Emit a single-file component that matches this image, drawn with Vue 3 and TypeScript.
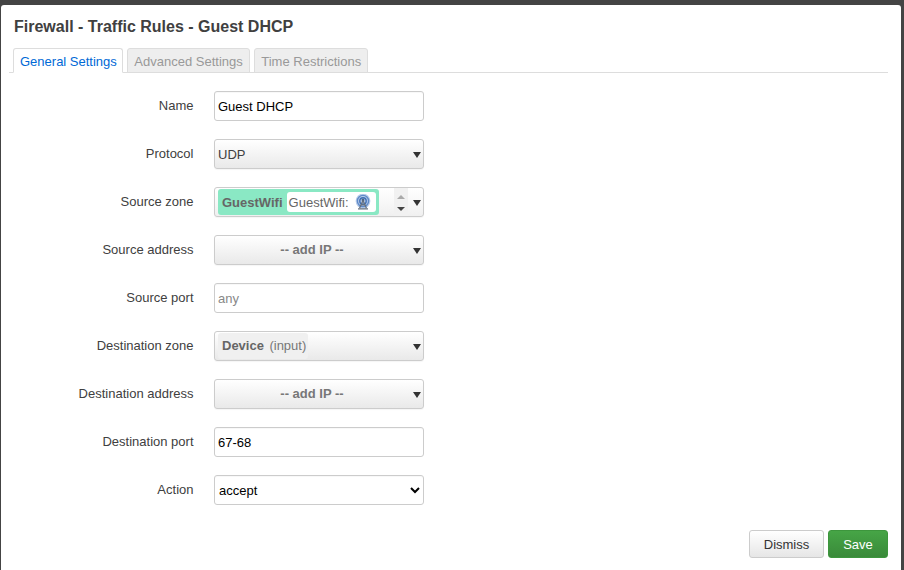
<script setup lang="ts">
interface Tab { label: string; active: boolean }
const tabs: Tab[] = [
  { label: 'General Settings', active: true },
  { label: 'Advanced Settings', active: false },
  { label: 'Time Restrictions', active: false },
]
</script>

<template>
  <div class="page">
    <div class="modal">
      <h4 class="title">Firewall - Traffic Rules - Guest DHCP</h4>
      <ul class="tabs">
        <li v-for="t in tabs" :key="t.label" class="tab" :class="{ active: t.active }">{{ t.label }}</li>
      </ul>
      <div class="form">
        <div class="row">
          <label class="lbl">Name</label>
          <input class="field" type="text" value="Guest DHCP" />
        </div>
        <div class="row">
          <label class="lbl">Protocol</label>
          <div class="drop"><span class="plain">UDP</span><span class="arrow"></span></div>
        </div>
        <div class="row">
          <label class="lbl">Source zone</label>
          <div class="drop zone-drop">
            <span class="zone">
              <b class="zone-name">GuestWifi</b>
              <span class="iface">GuestWifi:
                <svg class="wifi" viewBox="0 0 16 16" width="16" height="16">
                  <circle cx="8" cy="7" r="7.4" fill="#b9cdea" />
                  <circle cx="8" cy="7" r="5.6" fill="none" stroke="#5f8ac8" stroke-width="1.4" />
                  <circle cx="8" cy="7" r="3.2" fill="none" stroke="#3f6fb5" stroke-width="1.4" />
                  <circle cx="8" cy="6" r="1.4" fill="#4c6488" />
                  <path d="M8 6.5 L4.6 14 M8 6.5 L11.4 14 M3 14.8 H13 M6.2 10.8 H9.8" fill="none" stroke="#66707e" stroke-width="1.3" />
                </svg>
              </span>
            </span>
            <span class="spin"><i class="up"></i><i class="down"></i></span>
            <span class="arrow"></span>
          </div>
        </div>
        <div class="row">
          <label class="lbl">Source address</label>
          <div class="drop"><span class="add">-- add IP --</span><span class="arrow"></span></div>
        </div>
        <div class="row">
          <label class="lbl">Source port</label>
          <input class="field" type="text" placeholder="any" />
        </div>
        <div class="row">
          <label class="lbl">Destination zone</label>
          <div class="drop">
            <span class="device"><b>Device</b><span class="dim">(input)</span></span>
            <span class="arrow"></span>
          </div>
        </div>
        <div class="row">
          <label class="lbl">Destination address</label>
          <div class="drop"><span class="add">-- add IP --</span><span class="arrow"></span></div>
        </div>
        <div class="row">
          <label class="lbl">Destination port</label>
          <input class="field" type="text" value="67-68" />
        </div>
        <div class="row">
          <label class="lbl">Action</label>
          <select class="field select">
            <option>accept</option>
          </select>
        </div>
      </div>
      <div class="actions">
        <button class="btn dismiss" type="button">Dismiss</button>
        <button class="btn save" type="button">Save</button>
      </div>
    </div>
  </div>
</template>

<style>
html, body { margin: 0; background: #444; overflow: hidden; }
</style>

<style scoped>
.page {
  width: 904px;
  height: 570px;
  background: #444;
  padding: 5px 0 0 1px;
  box-sizing: border-box;
  overflow: hidden;
  font-family: "Liberation Sans", Arial, sans-serif;
  font-size: 13px;
  color: #404040;
}
.modal {
  width: 900px;
  height: 580px;
  background: #fff;
  border-radius: 3px;
  box-sizing: border-box;
  padding: 13px 13px 0 8px;
}
.title {
  margin: 0 0 12px 5px;
  font-size: 16px;
  line-height: 18px;
  font-weight: 700;
  color: #404040;
}
.tabs {
  display: flex;
  list-style: none;
  margin: 0;
  padding: 0 0 0 4px;
  gap: 4px;
  height: 25px;
  box-sizing: border-box;
  border-bottom: 1px solid #ddd;
}
.tab {
  height: 25px;
  box-sizing: border-box;
  padding: 0 6px;
  line-height: 26px;
  border: 1px solid #ddd;
  border-radius: 3px 3px 0 0;
  background: #eee;
  color: #999;
}
.tab.active {
  background: #fff;
  border-bottom-color: #fff;
  color: #0069d6;
  padding-right: 5.5px;
}
.tab:nth-child(2) { padding-right: 6.5px; }
.form {
  display: flex;
  flex-direction: column;
  gap: 18px;
  margin-top: 18px;
}
.row {
  display: flex;
  align-items: center;
  height: 30px;
}
.lbl {
  width: 184.5px;
  margin-right: 20.5px;
  text-align: right;
  color: #404040;
  position: relative;
  top: -1px;
}
.field {
  width: 210px;
  height: 30px;
  box-sizing: border-box;
  border: 1px solid #ccc;
  border-radius: 3px;
  background: #fff;
  padding: 0 3px;
  font: 13px "Liberation Sans", Arial, sans-serif;
  color: #000;
  box-shadow: inset 0 1px 1px rgba(0, 0, 0, 0.03);
  outline: none;
}
.field::placeholder { color: #888; opacity: 1; }
.select { padding: 0; }
.drop {
  width: 210px;
  height: 30px;
  box-sizing: border-box;
  border: 1px solid #ccc;
  border-radius: 3px;
  background: linear-gradient(#fff, #e9e9e9);
  display: flex;
  align-items: center;
  position: relative;
  box-shadow: 0 1px 1px rgba(0, 0, 0, 0.04);
}
.plain { padding-left: 3px; color: #404040; }
.arrow {
  position: absolute;
  right: 2.5px;
  top: 12px;
  width: 0;
  height: 0;
  border-left: 4px solid transparent;
  border-right: 4px solid transparent;
  border-top: 6px solid #333;
}
.add {
  width: 194px;
  text-align: center;
  font-weight: 700;
  color: #777;
  padding-bottom: 2px;
}
.zone-drop { padding-left: 3px; background: linear-gradient(#fff, #f0f0f0); }
.zone {
  display: flex;
  align-items: center;
  height: 26px;
  width: 161px;
  box-sizing: border-box;
  border-radius: 3px;
  background: #8ae8c4;
  padding: 0 3px 0 4px;
  gap: 4px;
}
.zone-name { color: #666; }
.iface {
  display: flex;
  align-items: center;
  height: 20px;
  flex: 1;
  box-sizing: border-box;
  background: #fff;
  border-radius: 3px;
  padding: 0 5px 0 2px;
  color: #666;
  white-space: nowrap;
  justify-content: space-between;
}
.wifi { flex: none; }
.spin {
  position: absolute;
  right: 15px;
  top: 0;
  width: 14px;
  height: 28px;
  background: #f1f1f1;
}
.spin .up, .spin .down {
  position: absolute;
  left: 3px;
  width: 0;
  height: 0;
  border-left: 4px solid transparent;
  border-right: 4px solid transparent;
}
.spin .up { top: 7px; border-bottom: 4px solid #aaa; }
.spin .down { top: 19px; border-top: 4px solid #444; }
.device {
  display: flex;
  align-items: center;
  gap: 5.5px;
  height: 26px;
  margin-left: 3px;
  padding: 0 2px 2px 4px;
  box-sizing: border-box;
  border-radius: 3px;
  background: #f0f0f0;
  color: #777;
}
.device b { color: #666; }
.dim { color: #777; }
.actions {
  display: flex;
  justify-content: flex-end;
  gap: 4px;
  margin-top: 25px;
}
.btn {
  height: 28px;
  box-sizing: border-box;
  border-radius: 3px;
  font: 13px "Liberation Sans", Arial, sans-serif;
  padding: 0;
}
.dismiss {
  width: 75px;
  border: 1px solid #ccc;
  background: linear-gradient(#fff, #e6e6e6);
  color: #333;
}
.save {
  width: 60px;
  border: 1px solid #3d963d;
  background: linear-gradient(#46a546, #3a8a3a);
  color: #fff;
}
</style>
